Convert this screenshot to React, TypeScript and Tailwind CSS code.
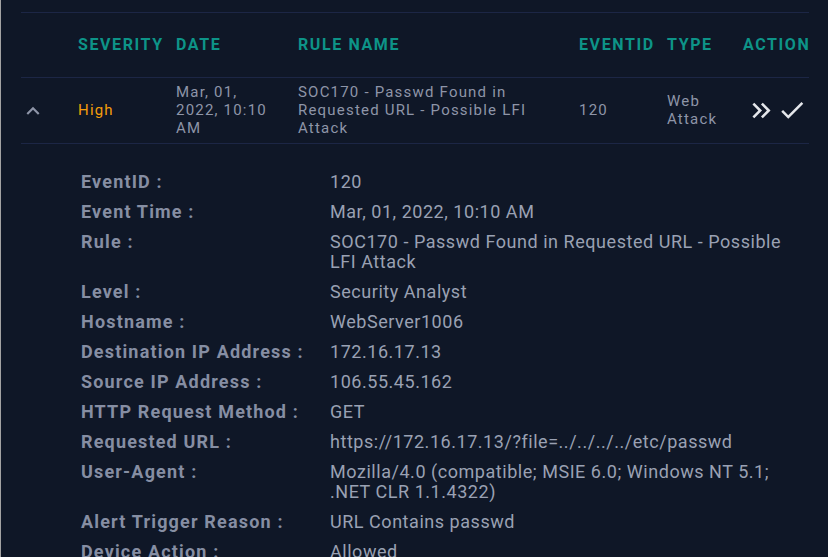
import React from "react";
import { MdKeyboardArrowUp, MdKeyboardDoubleArrowRight, MdCheck } from "react-icons/md";

const details: [string, string][] = [
  ["EventID :", "120"],
  ["Event Time :", "Mar, 01, 2022, 10:10 AM"],
  ["Rule :", "SOC170 - Passwd Found in Requested URL - Possible LFI Attack"],
  ["Level :", "Security Analyst"],
  ["Hostname :", "WebServer1006"],
  ["Destination IP Address :", "172.16.17.13"],
  ["Source IP Address :", "106.55.45.162"],
  ["HTTP Request Method :", "GET"],
  ["Requested URL :", "https://172.16.17.13/?file=../../../../etc/passwd"],
  ["User-Agent :", "Mozilla/4.0 (compatible; MSIE 6.0; Windows NT 5.1; .NET CLR 1.1.4322)"],
  ["Alert Trigger Reason :", "URL Contains passwd"],
  ["Device Action :", "Allowed"],
];

const cols = "grid grid-cols-[57px_98px_122px_281px_88px_76px_65px]";

export default function App() {
  return (
    <div
      className="w-[828px] h-[557px] overflow-hidden bg-[#0f1727] border-l border-[#a3a3a3]"
      style={{ fontFamily: "Roboto, 'Liberation Sans', sans-serif" }}
    >
      <div className="ml-[20px] w-[788px] pt-[12px]">
        {/* header */}
        <div className={`${cols} h-[66px] items-center border-t border-b border-[#1c2645] text-[16px] font-bold tracking-[0.1em] text-[#0d9488]`}>
          <div />
          <div>SEVERITY</div>
          <div>DATE</div>
          <div>RULE NAME</div>
          <div>EVENTID</div>
          <div>TYPE</div>
          <div className="whitespace-nowrap">ACTION</div>
        </div>
        {/* row */}
        <div className={`${cols} h-[66px] pb-[2px] items-center border-b border-[#1c2645] text-[15px] leading-[18px] tracking-[0.08em] text-[#8e95a8]`}>
          <div className="-ml-[1px] pt-[3px]">
            <MdKeyboardArrowUp className="text-[26px] text-[#8e95a8]" />
          </div>
          <div className="text-[#f59e0b]">High</div>
          <div className="pr-[20px]">Mar, 01, 2022, 10:10 AM</div>
          <div className="pr-[40px]">SOC170 - Passwd Found in Requested URL - Possible LFI Attack</div>
          <div>120</div>
          <div className="pr-[12px]">Web Attack</div>
          <div className="flex items-center gap-[0px] pl-[3px] pt-[1px]">
            <MdKeyboardDoubleArrowRight className="text-[31px] text-[#e5e7eb]" />
            <MdCheck className="text-[30px] text-[#e5e7eb]" />
          </div>
        </div>
        {/* details */}
        <div className="pl-[60px] pt-[28px] flex flex-col gap-[10px] text-[18px] leading-[20px]">
          {details.map(([k, v]) => (
            <div key={k} className="grid grid-cols-[249px_465px]">
              <div className="font-bold tracking-[0.065em] text-[#868ea3] whitespace-nowrap">{k}</div>
              <div className="text-[#9aa1b3] tracking-[0.03em]">{v}</div>
            </div>
          ))}
        </div>
      </div>
    </div>
  );
}
